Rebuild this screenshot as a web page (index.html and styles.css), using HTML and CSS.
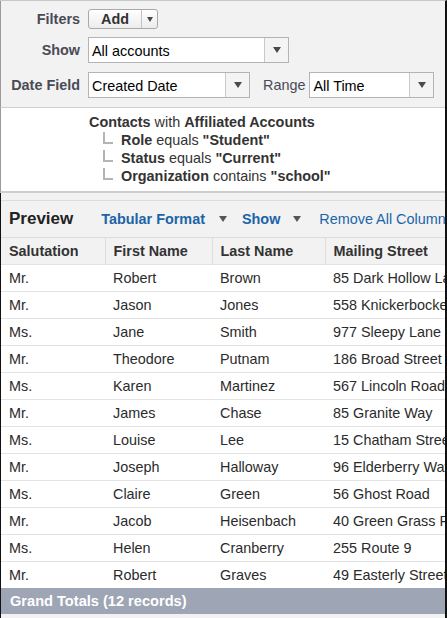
FILE: index.html
```html
<!DOCTYPE html>
<html lang="en">
<head>
  <meta charset="UTF-8" />
  <title>Report Builder</title>
  <link rel="stylesheet" href="styles.css">
</head>
<body>
  <div class="frame">
    <div class="filters-panel">
      <div class="filter-row row-filters">
        <span class="field-label">Filters</span>
        <div class="split-btn">
          <span class="split-main">Add</span>
          <span class="split-caret"><span class="tri"></span></span>
        </div>
      </div>
      <div class="filter-row row-select">
        <span class="field-label">Show</span>
        <div class="picklist picklist-show">
          <span class="picklist-value">All accounts</span>
          <span class="picklist-arrow"><span class="tri"></span></span>
        </div>
      </div>
      <div class="filter-row row-select">
        <span class="field-label">Date Field</span>
        <div class="picklist picklist-date">
          <span class="picklist-value">Created Date</span>
          <span class="picklist-arrow"><span class="tri"></span></span>
        </div>
        <span class="range-label">Range</span>
        <div class="picklist picklist-range">
          <span class="picklist-value">All Time</span>
          <span class="picklist-arrow"><span class="tri"></span></span>
        </div>
      </div>
    </div>

    <div class="criteria">
      <div class="criteria-line"><b>Contacts</b> with <b>Affiliated Accounts</b></div>
      <div class="criteria-line sub"><span class="elbow"></span><b>Role</b> equals <b>"Student"</b></div>
      <div class="criteria-line sub"><span class="elbow"></span><b>Status</b> equals <b>"Current"</b></div>
      <div class="criteria-line sub"><span class="elbow"></span><b>Organization</b> contains <b>"school"</b></div>
    </div>

    <div class="preview">
      <div class="preview-bar">
        <span class="preview-title">Preview</span>
        <span class="menu-link bold">Tabular Format</span>
        <span class="menu-caret first"></span>
        <span class="menu-link bold">Show</span>
        <span class="menu-caret second"></span>
        <span class="menu-link">Remove All Columns</span>
      </div>

      <div class="table-wrap">
        <table class="report">
          <colgroup>
            <col class="c1"><col class="c2"><col class="c3"><col class="c4">
          </colgroup>
          <thead>
            <tr>
              <th>Salutation</th>
              <th>First Name</th>
              <th>Last Name</th>
              <th>Mailing Street</th>
            </tr>
          </thead>
          <tbody>
            <tr><td>Mr.</td><td>Robert</td><td>Brown</td><td>85 Dark Hollow Lane</td></tr>
            <tr><td>Mr.</td><td>Jason</td><td>Jones</td><td>558 Knickerbocker Ave</td></tr>
            <tr><td>Ms.</td><td>Jane</td><td>Smith</td><td>977 Sleepy Lane</td></tr>
            <tr><td>Mr.</td><td>Theodore</td><td>Putnam</td><td>186 Broad Street</td></tr>
            <tr><td>Ms.</td><td>Karen</td><td>Martinez</td><td>567 Lincoln Road</td></tr>
            <tr><td>Mr.</td><td>James</td><td>Chase</td><td>85 Granite Way</td></tr>
            <tr><td>Ms.</td><td>Louise</td><td>Lee</td><td>15 Chatham Street</td></tr>
            <tr><td>Mr.</td><td>Joseph</td><td>Halloway</td><td>96 Elderberry Way</td></tr>
            <tr><td>Ms.</td><td>Claire</td><td>Green</td><td>56 Ghost Road</td></tr>
            <tr><td>Mr.</td><td>Jacob</td><td>Heisenbach</td><td>40 Green Grass Road</td></tr>
            <tr><td>Ms.</td><td>Helen</td><td>Cranberry</td><td>255 Route 9</td></tr>
            <tr><td>Mr.</td><td>Robert</td><td>Graves</td><td>49 Easterly Street</td></tr>
          </tbody>
        </table>
      </div>

      <div class="grand-totals">Grand Totals (12 records)</div>
    </div>
  </div>
</body>
</html>
```

FILE: styles.css
```css
body {
  margin: 0;
  font-family: "Liberation Sans", Arial, sans-serif;
  background-color: #fff;
}

.frame {
  width: 447px;
  height: 618px;
  box-sizing: border-box;
  border-top: 1px solid #c8c8c8;
  border-right: 2px solid #111;
  overflow: hidden;
  background-color: #fff;
}

/* top filter panel */

.filters-panel {
  background-color: #f2f2f2;
  border-left: 1px solid #9a9a9a;
  padding: 8px 0 9px 8px;
}

.filter-row {
  display: flex;
  align-items: center;
}

.row-filters {
  height: 20px;
  margin-bottom: 8px;
}

.row-select {
  height: 26px;
  margin-bottom: 9px;
}

.row-select:last-child {
  margin-bottom: 0;
}

.field-label {
  width: 71px;
  margin-right: 8px;
  text-align: right;
  font-size: 14.4px;
  font-weight: bold;
  color: #4a4a56;
  white-space: nowrap;
}

.range-label {
  margin: 0 4px 0 13px;
  font-size: 14.4px;
  color: #4a4a56;
}

.split-btn {
  display: flex;
  height: 20px;
  box-sizing: border-box;
  border: 1px solid #a9a9a9;
  border-radius: 3px;
  background: linear-gradient(#ffffff, #ececec);
}

.split-main {
  width: 52px;
  text-align: center;
  font-size: 14.4px;
  font-weight: bold;
  line-height: 18px;
  color: #333;
}

.split-caret {
  width: 15px;
  border-left: 1px solid #c4c4c4;
  display: flex;
  align-items: center;
  justify-content: center;
}

.tri {
  width: 0;
  height: 0;
  border-left: 4px solid transparent;
  border-right: 4px solid transparent;
  border-top: 6px solid #4a4a4a;
}

.split-caret .tri {
  border-left-width: 3px;
  border-right-width: 3px;
  border-top-width: 5px;
}

.picklist {
  display: flex;
  height: 26px;
  box-sizing: border-box;
  border: 1px solid #b4b4b4;
  background-color: #fff;
}

.picklist-show {
  width: 201px;
}

.picklist-date {
  width: 162px;
}

.picklist-range {
  width: 125px;
}

.picklist-value {
  flex: 1;
  padding-left: 3px;
  font-size: 14.4px;
  line-height: 26px;
  color: #000;
  white-space: nowrap;
}

.picklist-arrow {
  width: 23px;
  border-left: 1px solid #c8c8c8;
  background-color: #f4f4f4;
  display: flex;
  align-items: center;
  justify-content: center;
}

/* filter criteria box */

.criteria {
  background-color: #fff;
  border-left: 1px solid #9a9a9a;
  border-top: 1px solid #cfcfcf;
  border-bottom: 2px solid #cdcdcd;
  padding: 5px 0 6px 88px;
  font-size: 14.4px;
  color: #333;
}

.criteria-line {
  line-height: 18px;
  white-space: nowrap;
}

.criteria-line.sub {
  padding-left: 14px;
}

.elbow {
  display: inline-block;
  width: 8px;
  height: 10px;
  margin-right: 8px;
  border-left: 2px solid #b4b4b4;
  border-bottom: 2px solid #b4b4b4;
  vertical-align: 1px;
}

/* preview */

.preview {
  border-left: 1px solid #111;
  background-color: #f2f2f2;
  padding-top: 7px;
  height: 430px;
}

.preview-bar {
  display: flex;
  align-items: center;
  height: 36px;
  padding-left: 8px;
  border-top: 1px solid #dcdcdc;
  white-space: nowrap;
}

.preview-title {
  font-size: 17px;
  font-weight: bold;
  color: #222;
  margin-right: 28px;
}

.menu-link {
  font-size: 14.4px;
  color: #1b64a8;
}

.menu-link.bold {
  font-weight: bold;
}

.menu-caret {
  width: 0;
  height: 0;
  border-left: 4px solid transparent;
  border-right: 4px solid transparent;
  border-top: 6px solid #555;
}

.menu-caret.first {
  margin: 0 15px 0 14px;
}

.menu-caret.second {
  margin: 0 18px 0 13px;
}

.table-wrap {
  overflow: hidden;
}

.report {
  width: 600px;
  table-layout: fixed;
  border-collapse: collapse;
  font-size: 14.4px;
}

.report col.c1 { width: 104px; }
.report col.c2 { width: 107px; }
.report col.c3 { width: 113px; }
.report col.c4 { width: 276px; }

.report th {
  height: 26px;
  padding: 0 0 0 8px;
  text-align: left;
  font-weight: bold;
  color: #333;
  background-color: #f2f2f2;
  border-top: 1px solid #dcdcdc;
  border-right: 1px solid #dedede;
  white-space: nowrap;
}

.report td {
  height: 26px;
  padding: 0 0 0 8px;
  color: #2b2b2b;
  background-color: #fff;
  border-top: 1px solid #e3e3e3;
  white-space: nowrap;
  overflow: hidden;
}

.grand-totals {
  height: 26px;
  line-height: 26px;
  padding-left: 9px;
  background-color: #9ea5b5;
  color: #fff;
  font-size: 14.6px;
  font-weight: bold;
}
```
